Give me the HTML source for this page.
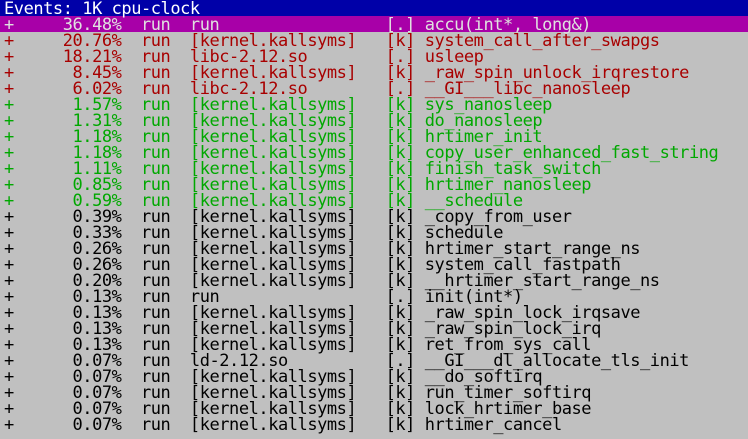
<!DOCTYPE html>
<html><head><meta charset="utf-8"><style>
html,body{margin:0;padding:0;background:#c0c0c0;width:748px;height:439px;overflow:hidden}
pre{margin:0;padding:0 0 0 4px;font-family:"DejaVu Sans Mono","Liberation Mono",monospace;font-size:17px;letter-spacing:-0.45px;line-height:18px;color:#000;white-space:pre}
.l{display:block;height:16px;margin-left:-4px;padding-left:4px;line-height:18px}
.h{background:#0000a8;color:#fff}
.s{background:#a800a8;color:#e0e0e0}
.r{color:#a80000}
.g{color:#00a800}
</style></head><body><pre><span class="l h">Events: 1K cpu-clock</span><span class="l s">+     36.48%  run  run                 [.] accu(int*, long&amp;)</span><span class="l r">+     20.76%  run  [kernel.kallsyms]   [k] system_call_after_swapgs</span><span class="l r">+     18.21%  run  libc-2.12.so        [.] usleep</span><span class="l r">+      8.45%  run  [kernel.kallsyms]   [k] _raw_spin_unlock_irqrestore</span><span class="l r">+      6.02%  run  libc-2.12.so        [.] __GI___libc_nanosleep</span><span class="l g">+      1.57%  run  [kernel.kallsyms]   [k] sys_nanosleep</span><span class="l g">+      1.31%  run  [kernel.kallsyms]   [k] do_nanosleep</span><span class="l g">+      1.18%  run  [kernel.kallsyms]   [k] hrtimer_init</span><span class="l g">+      1.18%  run  [kernel.kallsyms]   [k] copy_user_enhanced_fast_string</span><span class="l g">+      1.11%  run  [kernel.kallsyms]   [k] finish_task_switch</span><span class="l g">+      0.85%  run  [kernel.kallsyms]   [k] hrtimer_nanosleep</span><span class="l g">+      0.59%  run  [kernel.kallsyms]   [k] __schedule</span><span class="l">+      0.39%  run  [kernel.kallsyms]   [k] _copy_from_user</span><span class="l">+      0.33%  run  [kernel.kallsyms]   [k] schedule</span><span class="l">+      0.26%  run  [kernel.kallsyms]   [k] hrtimer_start_range_ns</span><span class="l">+      0.26%  run  [kernel.kallsyms]   [k] system_call_fastpath</span><span class="l">+      0.20%  run  [kernel.kallsyms]   [k] __hrtimer_start_range_ns</span><span class="l">+      0.13%  run  run                 [.] init(int*)</span><span class="l">+      0.13%  run  [kernel.kallsyms]   [k] _raw_spin_lock_irqsave</span><span class="l">+      0.13%  run  [kernel.kallsyms]   [k] _raw_spin_lock_irq</span><span class="l">+      0.13%  run  [kernel.kallsyms]   [k] ret_from_sys_call</span><span class="l">+      0.07%  run  ld-2.12.so          [.] __GI___dl_allocate_tls_init</span><span class="l">+      0.07%  run  [kernel.kallsyms]   [k] __do_softirq</span><span class="l">+      0.07%  run  [kernel.kallsyms]   [k] run_timer_softirq</span><span class="l">+      0.07%  run  [kernel.kallsyms]   [k] lock_hrtimer_base</span><span class="l">+      0.07%  run  [kernel.kallsyms]   [k] hrtimer_cancel</span></pre></body></html>
